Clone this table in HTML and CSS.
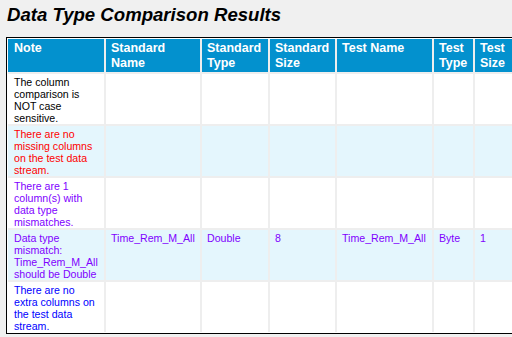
FILE: index.html
```html
<!DOCTYPE html>
<html>
<head>
<meta charset="utf-8">
<title>Data Type Comparison Results</title>
<link rel="stylesheet" href="styles.css">
</head>
<body>
<h1 class="title">Data Type Comparison Results</h1>
<table class="results">
  <thead>
    <tr>
      <th class="c-note">Note</th>
      <th class="c-sname">Standard Name</th>
      <th class="c-stype">Standard Type</th>
      <th class="c-ssize">Standard Size</th>
      <th class="c-tname">Test Name</th>
      <th class="c-ttype">Test Type</th>
      <th class="c-tsize">Test Size</th>
    </tr>
  </thead>
  <tbody>
    <tr class="row t-black">
      <td>The column comparison is NOT case sensitive.</td>
      <td></td><td></td><td></td><td></td><td></td><td></td>
    </tr>
    <tr class="row alt t-red">
      <td>There are no missing columns on the test data stream.</td>
      <td></td><td></td><td></td><td></td><td></td><td></td>
    </tr>
    <tr class="row t-purple">
      <td>There are 1 column(s) with data type mismatches.</td>
      <td></td><td></td><td></td><td></td><td></td><td></td>
    </tr>
    <tr class="row alt t-purple">
      <td>Data type mismatch: Time_Rem_M_All should be Double</td>
      <td>Time_Rem_M_All</td>
      <td>Double</td>
      <td>8</td>
      <td>Time_Rem_M_All</td>
      <td>Byte</td>
      <td>1</td>
    </tr>
    <tr class="row last t-blue">
      <td>There are no extra columns on the test data stream.</td>
      <td></td><td></td><td></td><td></td><td></td><td></td>
    </tr>
  </tbody>
</table>
</body>
</html>
```

FILE: styles.css
```css
html, body {
  margin: 0;
  padding: 0;
  overflow: hidden;
}

body {
  background: #f0f0f0;
  font-family: "Liberation Sans", Arial, sans-serif;
  width: 540px;
}

.title {
  margin: 4px 0 12px 0;
  padding-left: 7px;
  font-size: 18.6px;
  line-height: 21px;
  font-weight: bold;
  font-style: italic;
  color: #000;
}

.results {
  margin-left: 6px;
  border: 1px solid #000;
  padding: 1px 0 1px 1px;
  background: #fff;
  border-collapse: separate;
  border-spacing: 0;
  table-layout: fixed;
  width: 509px;
}

.results th,
.results td {
  box-sizing: border-box;
  border-right: 2px solid #eeeeee;
  border-bottom: 2px solid #eeeeee;
  text-align: left;
  vertical-align: top;
}

.results th {
  background: #0391ce;
  color: #fff;
  font-size: 12.5px;
  line-height: 15px;
  font-weight: bold;
  padding: 2px 5px 1px 5px;
}

.results td {
  font-size: 10.6px;
  line-height: 12px;
  padding: 2px 5px 0 5px;
  height: 52px;
}

.c-note { width: 98px; padding-left: 6px !important; }
.c-sname { width: 96px; }
.c-stype { width: 68px; }
.c-ssize { width: 67px; }
.c-tname { width: 97px; }
.c-ttype { width: 41px; }
.c-tsize { width: 42px; }

.results tr.row td:first-child {
  padding-left: 6px;
}

.row.alt td {
  background: #e4f6fd;
}

.row.last td {
  border-bottom: none;
  height: 50px;
}

.t-black td { color: #000; }
.t-red td { color: #ff0000; }
.t-purple td { color: #8000ff; }
.t-blue td { color: #0000ff; }
```
